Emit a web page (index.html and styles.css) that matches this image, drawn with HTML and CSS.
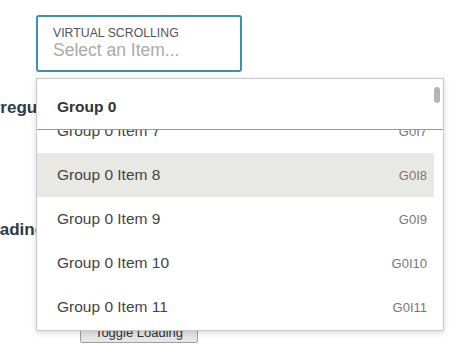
FILE: index.html
```html
<!DOCTYPE html>
<html lang="en">
<head>
    <meta charset="UTF-8">
    <meta name="viewport" content="width=device-width, initial-scale=1.0">
    <title>Virtual Scrolling Select</title>
    <link rel="stylesheet" href="styles.css">
</head>
<body>

    <!-- Select input -->
    <div class="select-box">
        <div class="select-label">Virtual Scrolling</div>
        <div class="select-placeholder">Select an Item...</div>
    </div>

    <!-- Page content behind the menu -->
    <h3 class="section-title irregular">Irregular Heights</h3>
    <h3 class="section-title loading">Loading State</h3>
    <button class="toggle-btn">Toggle Loading</button>

    <!-- Dropdown menu -->
    <div class="dropdown">
        <div class="group-header">Group 0</div>
        <div class="item-list">
            <div class="items">
                <div class="item"><span>Group 0 Item 7</span><span class="code">G0I7</span></div>
                <div class="item active"><span>Group 0 Item 8</span><span class="code">G0I8</span></div>
                <div class="item"><span>Group 0 Item 9</span><span class="code">G0I9</span></div>
                <div class="item"><span>Group 0 Item 10</span><span class="code">G0I10</span></div>
                <div class="item"><span>Group 0 Item 11</span><span class="code">G0I11</span></div>
            </div>
        </div>
        <div class="scroll-thumb"></div>
    </div>

</body>
</html>
```

FILE: styles.css
```css
/* Global Styles */
body {
    font-family: 'Liberation Sans', Arial, sans-serif;
    margin: 0;
    padding: 0;
    background: white;
    color: #333;
    position: relative;
    overflow: hidden;
}

/* Select input */
.select-box {
    margin: 15px 0 0 36px;
    width: 206px;
    height: 57px;
    box-sizing: border-box;
    border: 2px solid #3a93a9;
    border-radius: 3px;
    padding: 9px 15px 0;
}

.select-label {
    font-size: 12.3px;
    line-height: 14px;
    text-transform: uppercase;
    color: #555;
}

.select-placeholder {
    font-size: 17.5px;
    line-height: 20px;
    color: #aaa;
}

/* Background sections */
.section-title {
    font-size: 17px;
    line-height: 20px;
    font-weight: bold;
    color: #2d3a45;
    margin: 0;
    white-space: nowrap;
}

.irregular {
    margin-top: 26px;
    margin-left: -11px;
}

.loading {
    margin-top: 102px;
    margin-left: -21px;
}

.toggle-btn {
    display: block;
    margin: 81px 0 0 80px;
    width: 118px;
    height: 22px;
    font-family: inherit;
    font-size: 13px;
    color: #333;
    background: #e6e6e6;
    border: 1px solid #a0a0a0;
    border-radius: 2px;
}

/* Dropdown menu */
.dropdown {
    position: absolute;
    top: 78px;
    left: 36px;
    width: 408px;
    height: 253px;
    box-sizing: border-box;
    background: white;
    border: 1px solid #c8c8c8;
    box-shadow: 0 2px 6px rgba(0, 0, 0, 0.15);
    display: flex;
    flex-direction: column;
}

.group-header {
    height: 51px;
    box-sizing: border-box;
    flex-shrink: 0;
    padding: 6px 0 0 20px;
    display: flex;
    align-items: center;
    font-size: 15.5px;
    font-weight: bold;
    color: #333;
    border-bottom: 1px solid #999;
    position: relative;
    z-index: 1;
    background: white;
}

.item-list {
    flex: 1;
    overflow: hidden;
    padding-right: 9px;
}

.items {
    margin-top: -21px;
}

.item {
    height: 44px;
    display: flex;
    align-items: center;
    justify-content: space-between;
    padding: 0 7px 0 20px;
    font-size: 15.5px;
    color: #444;
}

.item.active {
    background: #e8e8e4;
}

.item .code {
    font-size: 13px;
    color: #777;
}

.scroll-thumb {
    position: absolute;
    top: 8px;
    right: 3px;
    width: 6px;
    height: 16px;
    border-radius: 3px;
    background: #b4b4b4;
    z-index: 2;
}
```
